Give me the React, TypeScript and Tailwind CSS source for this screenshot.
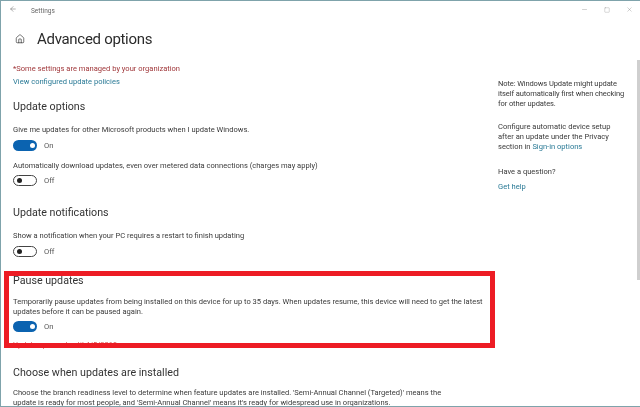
import React from 'react'
import { ArrowLeft, House, Minus, Square, X } from 'lucide-react'

function Toggle({ on }: { on: boolean }) {
  return (
    <div className="flex h-[11px] items-center gap-[7px]">
      {on ? (
        <span className="flex h-[11px] w-[24px] items-center justify-end rounded-full bg-[#0b63b0] pr-[2px]">
          <span className="h-[5px] w-[5px] rounded-full bg-white" />
        </span>
      ) : (
        <span className="flex h-[11px] w-[24px] items-center rounded-full border border-[#444] bg-white pl-[3px]">
          <span className="h-[5px] w-[5px] rounded-full bg-[#222]" />
        </span>
      )}
      <span className="text-[#555]">{on ? 'On' : 'Off'}</span>
    </div>
  )
}

function Heading({ className, children }: { className: string; children: React.ReactNode }) {
  return <h2 className={`h-[16px] text-[10.7px] leading-[16px] text-[#333] ${className}`}>{children}</h2>
}

export default function App() {
  return (
    <div className="relative flex h-[407px] w-[640px] flex-col overflow-hidden border-t border-b border-l border-[#7fa3ab] bg-white text-[7.55px] leading-[10px] text-[#3a3a3a] blur-[0.3px] [font-family:Roboto,sans-serif]">
      {/* title bar */}
      <div className="flex h-[19px] shrink-0 items-center pl-[8px] pr-[7px] text-[#666]">
        <ArrowLeft size={8} strokeWidth={1.5} className="-mt-[3px]" />
        <span className="ml-[14px] text-[6.5px]">Settings</span>
        <div className="ml-auto flex -translate-y-[1px] items-center gap-[16px]">
          <Minus size={7} strokeWidth={1} />
          <Square size={6} strokeWidth={1} />
          <X size={7} strokeWidth={1} />
        </div>
      </div>

      <div className="flex min-h-0 flex-1">
        <main className="w-[496px] shrink-0 pl-[12px] whitespace-nowrap">
          <div className="mt-[7px] flex h-[24px] items-center">
            <House size={10} strokeWidth={1.5} className="ml-[2px] text-[#222]" />
            <h1 className="ml-[12px] text-[15px] leading-[24px] tracking-[-0.3px] text-[#2b2b2b]">Advanced options</h1>
          </div>

          <p className="mt-[13px] text-[#a0373a]">*Some settings are managed by your organization</p>
          <p className="mt-[3px] text-[#2a7a96]">View configured update policies</p>

          <Heading className="mt-[12px]">Update options</Heading>
          <p className="mt-[10px]">Give me updates for other Microsoft products when I update Windows.</p>
          <div className="mt-[5px]"><Toggle on /></div>
          <p className="mt-[10px]">Automatically download updates, even over metered data connections (charges may apply)</p>
          <div className="mt-[4px]"><Toggle on={false} /></div>

          <Heading className="mt-[19px]">Update notifications</Heading>
          <p className="mt-[10px]">Show a notification when your PC requires a restart to finish updating</p>
          <div className="mt-[5px]"><Toggle on={false} /></div>

          <Heading className="mt-[16px]">Pause updates</Heading>
          <p className="mt-[8px]">
            Temporarily pause updates from being installed on this device for up to 35 days. When updates resume, this device will need to get the latest
            <br />
            updates before it can be paused again.
          </p>
          <div className="mt-[4px]"><Toggle on /></div>
          <p className="mt-[8px] text-[#d9534f]">Updates paused until 4/5/2019</p>

          <Heading className="mt-[15px]">Choose when updates are installed</Heading>
          <p className="mt-[7px]">
            Choose the branch readiness level to determine when feature updates are installed. 'Semi-Annual Channel (Targeted)' means the
            <br />
            update is ready for most people, and 'Semi-Annual Channel' means it's ready for widespread use in organizations.
          </p>
        </main>

        <aside className="w-[139px] shrink-0 pt-[59px] pl-[1px] whitespace-nowrap">
          <p className="tracking-[-0.12px]">
            Note: Windows Update might update
            <br />
            itself automatically first when checking
            <br />
            for other updates.
          </p>
          <p className="mt-[13px]">
            Configure automatic device setup
            <br />
            after an update under the Privacy
            <br />
            section in <span className="text-[#2a7a96]">Sign-in options</span>
          </p>
          <p className="mt-[15px]">Have a question?</p>
          <p className="mt-[5px] text-[#2a7a96]">Get help</p>
        </aside>

        {/* scrollbar */}
        <div className="ml-auto mt-[40px] h-[220px] w-[3px] shrink-0 bg-[#cfcfcf]" />
      </div>

      {/* annotation drawn over the screenshot */}
      <div className="absolute top-[270px] left-[3px] h-[77px] w-[491px] border-[5px] border-[#ed1c24]" />
    </div>
  )
}
